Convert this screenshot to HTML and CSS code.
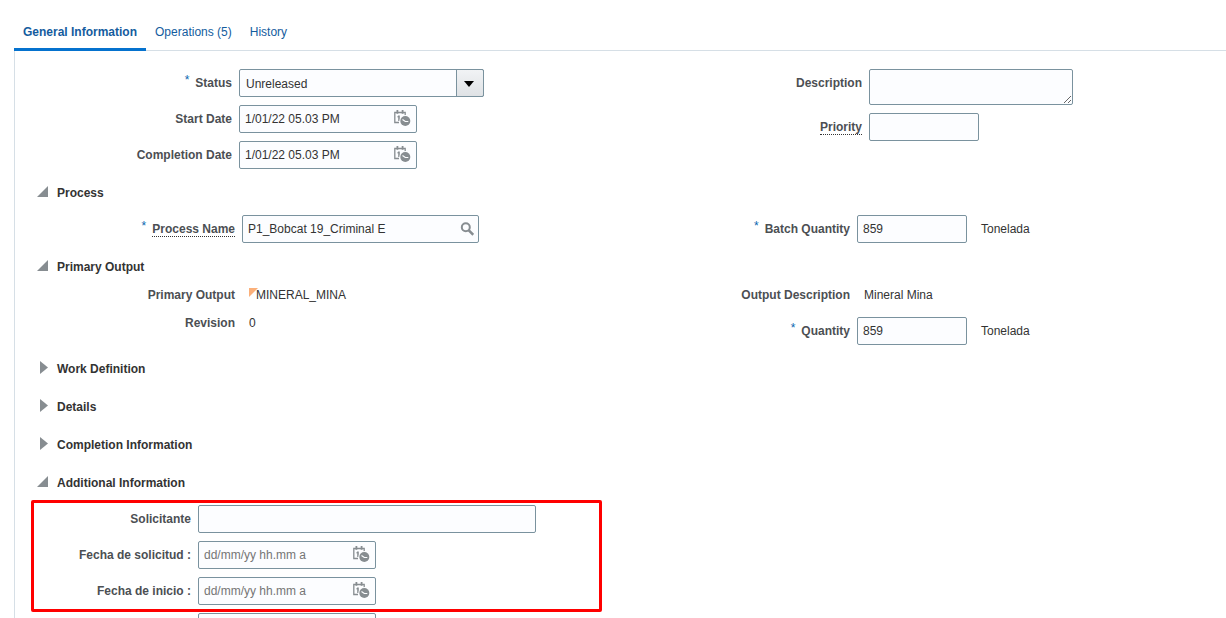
FILE: index.html
```html
<!DOCTYPE html>
<html lang="en">
<head>
  <meta charset="UTF-8">
  <title>Work Order</title>
  <link rel="stylesheet" href="styles.css">
</head>
<body>

  <!-- shared icons -->
  <svg class="sprite" width="0" height="0">
    <symbol id="calendar" viewBox="0 0 18 18">
      <path d="M5 12.500H.800V2.500h10.400V6" fill="none" stroke="#878d91" stroke-width="1.300"/>
      <path d="M2.500 0h1.800v3.800H2.500zM7.700 0h1.800v3.800H7.700z" fill="#878d91"/>
      <path d="M4.200 5.500h1.600V11H4.200V7.200H3z" fill="#878d91"/>
      <circle cx="11.300" cy="11" r="5.900" fill="#fcfdff"/>
      <circle cx="11.300" cy="11" r="5" fill="#878d91"/>
      <path d="M8.500 9.500l2.800 2h3" fill="none" stroke="#fcfdff" stroke-width="1.200"/>
    </symbol>
    <symbol id="search" viewBox="0 0 14 14">
      <circle cx="5.800" cy="5.300" r="4" fill="none" stroke="#878d91" stroke-width="2"/>
      <path d="M8.800 8.300l4.500 4.500" stroke="#878d91" stroke-width="2.600"/>
    </symbol>
    <symbol id="open" viewBox="0 0 12 14">
      <path d="M0 12L11 1v11z" fill="#878d91"/>
    </symbol>
    <symbol id="closed" viewBox="0 0 12 14">
      <path d="M3 0l8 6.500L3 13z" fill="#878d91"/>
    </symbol>
  </svg>

  <nav class="tabs">
    <a class="tab active" href="#general">General Information</a>
    <a class="tab" href="#operations">Operations (5)</a>
    <a class="tab" href="#history">History</a>
  </nav>

  <main class="panel" id="general">

    <div class="form general">
      <div class="column">
        <div class="row">
          <label for="status"><span class="required">*</span>Status</label>
          <div class="dropdown">
            <select id="status">
              <option>Unreleased</option>
            </select>
            <span class="arrow"></span>
          </div>
        </div>
        <div class="row">
          <label for="startDate">Start Date</label>
          <div class="field date">
            <input id="startDate" type="text" value="1/01/22 05.03 PM">
            <button type="button" class="icon" aria-label="Select start date"><svg width="18" height="18"><use href="#calendar"/></svg></button>
          </div>
        </div>
        <div class="row">
          <label for="completionDate">Completion Date</label>
          <div class="field date">
            <input id="completionDate" type="text" value="1/01/22 05.03 PM">
            <button type="button" class="icon" aria-label="Select completion date"><svg width="18" height="18"><use href="#calendar"/></svg></button>
          </div>
        </div>
      </div>
      <div class="column">
        <div class="row">
          <label for="description">Description</label>
          <textarea id="description"></textarea>
        </div>
        <div class="row">
          <label for="priority"><span class="hint">Priority</span></label>
          <input id="priority" class="short" type="text">
        </div>
      </div>
    </div>

    <h2><button type="button" aria-expanded="true"><svg width="12" height="14"><use href="#open"/></svg>Process</button></h2>
    <div class="form process">
      <div class="column">
        <div class="row">
          <label for="processName"><span class="required">*</span><span class="hint">Process Name</span></label>
          <div class="field lookup">
            <input id="processName" type="text" value="P1_Bobcat 19_Criminal E">
            <button type="button" class="icon" aria-label="Search process"><svg width="14" height="14"><use href="#search"/></svg></button>
          </div>
        </div>
      </div>
      <div class="column">
        <div class="row">
          <label for="batchQuantity"><span class="required">*</span>Batch Quantity</label>
          <input id="batchQuantity" class="short" type="text" value="859">
          <span class="unit">Tonelada</span>
        </div>
      </div>
    </div>

    <h2><button type="button" aria-expanded="true"><svg width="12" height="14"><use href="#open"/></svg>Primary Output</button></h2>
    <div class="form process">
      <div class="column">
        <div class="row static">
          <span class="label">Primary Output</span>
          <span class="value marked">MINERAL_MINA</span>
        </div>
        <div class="row static">
          <span class="label">Revision</span>
          <span class="value">0</span>
        </div>
      </div>
      <div class="column">
        <div class="row static">
          <span class="label">Output Description</span>
          <span class="value">Mineral Mina</span>
        </div>
        <div class="row">
          <label for="quantity"><span class="required">*</span>Quantity</label>
          <input id="quantity" class="short" type="text" value="859">
          <span class="unit">Tonelada</span>
        </div>
      </div>
    </div>

    <h2><button type="button" aria-expanded="false"><svg width="12" height="14"><use href="#closed"/></svg>Work Definition</button></h2>
    <h2><button type="button" aria-expanded="false"><svg width="12" height="14"><use href="#closed"/></svg>Details</button></h2>
    <h2><button type="button" aria-expanded="false"><svg width="12" height="14"><use href="#closed"/></svg>Completion Information</button></h2>

    <h2><button type="button" aria-expanded="true"><svg width="12" height="14"><use href="#open"/></svg>Additional Information</button></h2>
    <div class="additional">
      <div class="column highlight">
        <div class="row">
          <label for="solicitante">Solicitante</label>
          <input id="solicitante" class="long" type="text">
        </div>
        <div class="row">
          <label for="fechaSolicitud">Fecha de solicitud :</label>
          <div class="field date">
            <input id="fechaSolicitud" type="text" placeholder="dd/mm/yy hh.mm a">
            <button type="button" class="icon" aria-label="Seleccionar fecha de solicitud"><svg width="18" height="18"><use href="#calendar"/></svg></button>
          </div>
        </div>
        <div class="row">
          <label for="fechaInicio">Fecha de inicio :</label>
          <div class="field date">
            <input id="fechaInicio" type="text" placeholder="dd/mm/yy hh.mm a">
            <button type="button" class="icon" aria-label="Seleccionar fecha de inicio"><svg width="18" height="18"><use href="#calendar"/></svg></button>
          </div>
        </div>
      </div>
      <div class="column">
        <div class="row">
          <span class="label"></span>
          <div class="field date">
            <input type="text" aria-label="Fecha">
          </div>
        </div>
      </div>
    </div>

  </main>

</body>
</html>
```
FILE: styles.css
```css
*, *::before, *::after {
  box-sizing: border-box;
}
html, body {
  height: 100%;
  overflow: hidden;
}
body {
  margin: 0;
  padding: 22px 0 0 14px;
  background-color: #fff;
  color: #333;
  font-family: "Liberation Sans", Arial, sans-serif;
  font-size: 12px;
  line-height: 20px;
}
input, select, textarea, button {
  font: inherit;
  color: inherit;
}
.sprite {
  position: absolute;
}

/* tabs */
.tabs {
  display: flex;
  border-bottom: 1px solid #d6dfe6;
}
.tab {
  padding: 0 9px 6px;
  margin-bottom: -1px;
  border-bottom: 3px solid transparent;
  color: #145c9e;
  text-decoration: none;
}
.tab.active {
  border-bottom-color: #0572ce;
  font-weight: bold;
}

.panel {
  padding: 10px 1px 0 0;
  border-left: 1px solid #d6dfe6;
}

/* section headings */
h2 {
  margin: 0;
  padding: 14px 0 4px 22px;
  font-size: 12px;
  line-height: 20px;
}
h2 button {
  display: flex;
  align-items: center;
  gap: 8px;
  padding: 0;
  border: none;
  background: none;
  font-weight: bold;
}
h2 svg {
  margin-bottom: 2px;
}

/* forms */
.form {
  display: grid;
  grid-template-columns: 1fr 1fr;
}
.row {
  display: flex;
  align-items: flex-start;
  gap: 7px;
  padding-top: 8px;
  line-height: 28px;
}
.row.static {
  padding-top: 0;
}
label, .label {
  flex: none;
  color: #4c4f53;
  font-weight: bold;
  text-align: right;
}
.general label {
  width: 217px;
}
.general .column + .column label {
  width: 242px;
}
.process label, .process .label {
  width: 220px;
}
.process .column + .column label,
.process .column + .column .label {
  width: 230px;
}
.additional label, .additional .label {
  width: 176px;
}
.required {
  margin-right: 6px;
  color: #0a66b0;
  font-weight: normal;
  line-height: 1;
  vertical-align: 3px;
}
.hint {
  border-bottom: 1px dotted #333;
}
.value {
  padding-left: 7px;
}
.unit {
  padding-left: 7px;
}

input, select, textarea {
  height: 28px;
  margin: 0;
  padding: 0 5px;
  border: 1px solid #7a929e;
  border-radius: 2px;
  background-color: #fcfdff;
}
input::placeholder {
  color: #757575;
}
textarea {
  width: 204px;
  height: 36px;
}
.short {
  width: 110px;
}
.long {
  width: 338px;
}

.field, .dropdown {
  position: relative;
  display: flex;
}
.field input {
  width: 100%;
  padding-right: 28px;
}
.date {
  width: 178px;
}
.lookup {
  width: 237px;
}
.dropdown {
  width: 245px;
}
.dropdown select {
  width: 100%;
  padding: 0 6px 2px;
  appearance: none;
}
.arrow {
  position: absolute;
  top: 0;
  right: 0;
  width: 28px;
  height: 28px;
  border: 1px solid #7a929e;
  border-radius: 0 2px 2px 0;
  background: linear-gradient(#f1f3f5, #dfe2e5);
  pointer-events: none;
}
.arrow::after {
  content: "";
  position: absolute;
  top: 11px;
  left: 7px;
  border: 5px solid transparent;
  border-top: 6px solid #000;
  border-bottom: none;
}
.icon {
  position: absolute;
  top: 0;
  right: 5px;
  display: flex;
  align-items: center;
  height: 28px;
  padding: 0;
  border: none;
  background: none;
}

/* changed value flag */
.marked {
  position: relative;
  padding-left: 14px;
}
.marked::before {
  content: "";
  position: absolute;
  z-index: -1;
  top: 7px;
  left: 7px;
  border-top: 9px solid #fbb07a;
  border-right: 9px solid transparent;
}

.highlight {
  position: relative;
}
.highlight::after {
  content: "";
  position: absolute;
  top: 3px;
  bottom: -7px;
  left: 16px;
  width: 571px;
  border: 3px solid #f00;
  border-radius: 2px;
  pointer-events: none;
}
```
